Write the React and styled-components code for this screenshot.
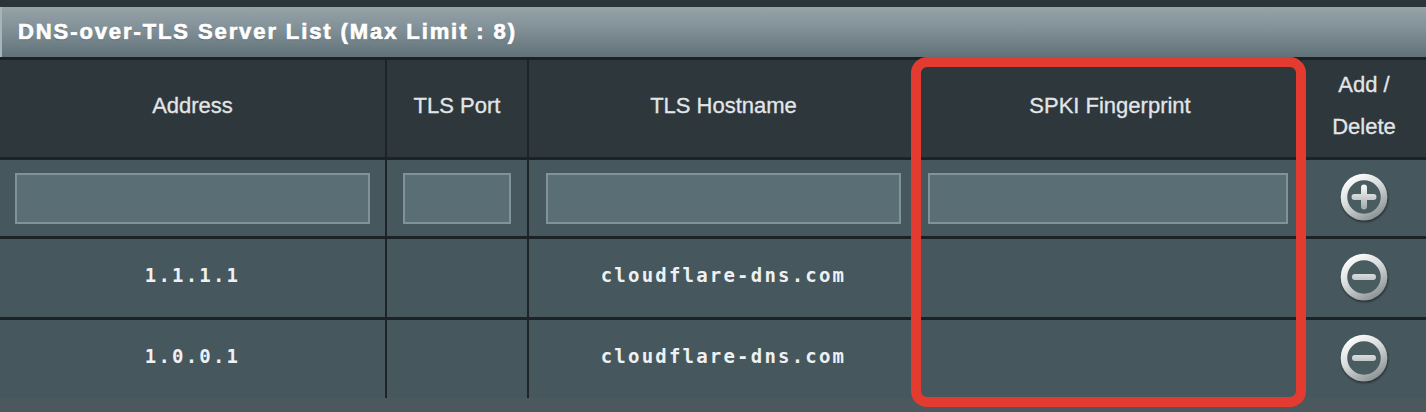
import React from 'react'
import styled, { createGlobalStyle } from 'styled-components'

const GlobalStyle = createGlobalStyle`
  html, body {
    margin: 0;
    padding: 0;
    background: #4b585e;
  }
  * {
    box-sizing: border-box;
  }
`

const COLUMNS = '385px 142px 391px 382px 1fr'

const Panel = styled.div`
  position: relative;
  width: 1426px;
  height: 412px;
  overflow: hidden;
  background: #4b585e;
  border-top: 7px solid #2b3438;
`

const TitleBar = styled.div`
  height: 50px;
  display: flex;
  align-items: center;
  padding-left: 16px;
  background: linear-gradient(to bottom, #96a3a9 0%, #7e8d94 50%, #617178 100%);
  border-left: 2px solid #a9b4b9;
  color: #ffffff;
  font-family: 'Liberation Sans', Arial, sans-serif;
  font-weight: bold;
  font-size: 22px;
  letter-spacing: 1.9px;
  -webkit-text-stroke: 0.7px #ffffff;
  text-shadow: 0 1px 1px rgba(0, 0, 0, 0.35);
`

const Row = styled.div`
  display: grid;
  grid-template-columns: ${COLUMNS};
  height: ${(p) => p.$height}px;
  background: ${(p) => p.$bg};
  border-top: 3px solid #1c2326;
`

const Cell = styled.div`
  display: flex;
  flex-direction: column;
  align-items: center;
  justify-content: center;
  padding: 0 ${(p) => p.$pad || 0}px;
  border-left: 2px solid #1d2427;
  &:first-child {
    border-left: none;
  }
`

const HeadText = styled.span`
  font-family: 'Liberation Sans', Arial, sans-serif;
  font-size: 22px;
  color: #e2e6e8;
  line-height: 42px;
  text-align: center;
  margin-top: -5px;
  -webkit-text-stroke: 0.3px #e2e6e8;
`

const MonoText = styled.span`
  font-family: 'DejaVu Sans Mono', 'Liberation Mono', monospace;
  font-weight: bold;
  font-size: 19px;
  letter-spacing: 2.2px;
  color: #eef1f2;
  margin-top: -6px;
`

const Field = styled.input`
  width: 100%;
  height: 51px;
  background: #5a6e76;
  border: 2px solid #80939a;
  outline: none;
  margin: 0;
`

const IconButton = styled.button`
  width: 52px;
  height: 52px;
  padding: 0;
  border: none;
  background: transparent;
  cursor: pointer;
  display: flex;
  align-items: center;
  justify-content: center;
`

const Highlight = styled.div`
  position: absolute;
  left: 911px;
  top: 50px;
  width: 395px;
  height: 350px;
  border: 10px solid #e33b2f;
  border-radius: 16px;
  pointer-events: none;
`

function RoundIcon({ plus, id }) {
  return (
    <svg width="52" height="52" viewBox="0 0 52 52">
      <defs>
        <linearGradient id={`ring-${id}`} gradientUnits="userSpaceOnUse" x1="10" y1="5" x2="36" y2="46">
          <stop offset="0" stopColor="#ffffff" />
          <stop offset="0.45" stopColor="#d9dcdd" />
          <stop offset="1" stopColor="#8f9597" />
        </linearGradient>
        <linearGradient id={`mark-${id}`} gradientUnits="userSpaceOnUse" x1="0" y1="15" x2="0" y2="35">
          <stop offset="0" stopColor="#f4f5f5" />
          <stop offset="1" stopColor="#a9aeb0" />
        </linearGradient>
        <filter id={`sh-${id}`} x="-20%" y="-20%" width="140%" height="140%">
          <feDropShadow dx="0.5" dy="1.5" stdDeviation="1.2" floodColor="#000" floodOpacity="0.55" />
        </filter>
      </defs>
      <g filter={`url(#sh-${id})`}>
        <circle cx="26" cy="25" r="20" fill="#4a5b61" stroke={`url(#ring-${id})`} strokeWidth="6.5" />
        {plus ? (
          <path d="M26 15.5 V34.5 M16.5 25 H35.5" stroke={`url(#mark-${id})`} strokeWidth="6" strokeLinecap="round" />
        ) : (
          <path d="M17 25 H35" stroke={`url(#mark-${id})`} strokeWidth="6" strokeLinecap="round" />
        )}
      </g>
    </svg>
  )
}

const servers = [
  { address: '1.1.1.1', port: '', hostname: 'cloudflare-dns.com', spki: '' },
  { address: '1.0.0.1', port: '', hostname: 'cloudflare-dns.com', spki: '' },
]

export default function App() {
  return (
    <>
      <GlobalStyle />
      <Panel>
        <TitleBar>DNS-over-TLS Server List (Max Limit : 8)</TitleBar>
        <Row $height={100} $bg="#2e373b">
          <Cell><HeadText>Address</HeadText></Cell>
          <Cell><HeadText>TLS Port</HeadText></Cell>
          <Cell><HeadText>TLS Hostname</HeadText></Cell>
          <Cell><HeadText>SPKI Fingerprint</HeadText></Cell>
          <Cell><HeadText>Add /<br />Delete</HeadText></Cell>
        </Row>
        <Row $height={79} $bg="#46575e">
          <Cell $pad={15}><Field /></Cell>
          <Cell $pad={16}><Field /></Cell>
          <Cell $pad={17}><Field /></Cell>
          <Cell $pad={10}><Field style={{ marginRight: 4 }} /></Cell>
          <Cell><IconButton><RoundIcon plus id="add" /></IconButton></Cell>
        </Row>
        {servers.map((s, i) => (
          <Row key={i} $height={81} $bg="#46575e">
            <Cell><MonoText>{s.address}</MonoText></Cell>
            <Cell><MonoText>{s.port}</MonoText></Cell>
            <Cell><MonoText>{s.hostname}</MonoText></Cell>
            <Cell><MonoText>{s.spki}</MonoText></Cell>
            <Cell><IconButton><RoundIcon id={`del-${i}`} /></IconButton></Cell>
          </Row>
        ))}
        <Highlight />
      </Panel>
    </>
  )
}
